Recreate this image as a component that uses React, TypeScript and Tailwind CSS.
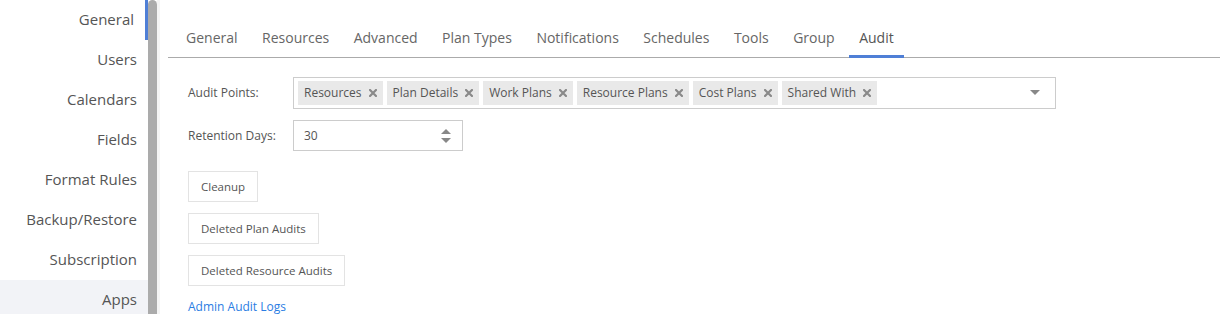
import React from "react";

const sideItems = ["General", "Users", "Calendars", "Fields", "Format Rules", "Backup/Restore", "Subscription", "Apps"];
const tabs = ["General", "Resources", "Advanced", "Plan Types", "Notifications", "Schedules", "Tools", "Group", "Audit"];
const tags = ["Resources", "Plan Details", "Work Plans", "Resource Plans", "Cost Plans", "Shared With"];

function XIcon() {
  return (
    <svg width="8" height="8" viewBox="0 0 8 8" className="ml-[7px]">
      <path d="M1 1L7 7M7 1L1 7" stroke="#8a8a8a" strokeWidth="2.2" strokeLinecap="square" />
    </svg>
  );
}

export default function App() {
  return (
    <div className="flex h-[314px] w-[1220px] overflow-hidden bg-white" style={{ fontFamily: '"Open Sans", "Noto Sans", sans-serif' }}>
      <div className="flex w-[148px] shrink-0 flex-col">
        {sideItems.map((s, i) => (
          <div
            key={s}
            className={`flex h-[40px] shrink-0 items-center justify-end pb-[1px] pr-[11px] text-[15px] text-[#555] ${i === 0 ? "border-r-[3px] border-[#4f7fd6] pr-[8px]" : ""} ${i === 7 ? "bg-[#f2f3f7]" : ""}`}
          >
            {s}
          </div>
        ))}
      </div>
      <div className="w-[9px] shrink-0 rounded-t-[5px] bg-[#ababab]" />
      <div className="w-[3px] shrink-0 bg-[#f4f4f4]" />
      <div className="flex min-w-0 flex-1 flex-col pl-[8px]">
        <div className="flex h-[58px] shrink-0 items-end gap-[4.5px] border-b border-[#ababab] pl-[8px]">
          {tabs.map((t) => (
            <div
              key={t}
              className={`-mb-px px-[10px] pb-[7px] text-[14px] leading-[20px] ${t === "Audit" ? "border-b-[3px] border-[#4f7fd6] text-[#555]" : "border-b-[3px] border-transparent text-[#666]"}`}
            >
              {t}
            </div>
          ))}
        </div>
        <div className="flex shrink-0 flex-col pl-[20px] pt-[19px] text-[12px] text-[#555]">
          <div className="flex items-center">
            <div className="w-[105px] shrink-0">Audit Points:</div>
            <div className="flex h-[32px] w-[763px] items-center gap-[4px] border border-[#ccc] px-[4px]">
              {tags.map((t) => (
                <div key={t} className="flex h-[24px] items-center bg-[#e9e9e9] px-[6px] text-[#555]">
                  {t}
                  <XIcon />
                </div>
              ))}
              <div className="flex-1" />
              <svg width="10" height="6" viewBox="0 0 10 6" className="mr-[11px]">
                <path d="M0 0H10L5 5Z" fill="#888" />
              </svg>
            </div>
          </div>
          <div className="mt-[11px] flex items-center">
            <div className="w-[105px] shrink-0">Retention Days:</div>
            <div className="flex h-[31px] w-[170px] items-center border border-[#ccc] pl-[10px] pr-[10px]">
              <span className="flex-1">30</span>
              <svg width="12" height="16" viewBox="0 0 12 16">
                <path d="M1 6L6 1L11 6Z" fill="#888" />
                <path d="M1 10L6 15L11 10Z" fill="#888" />
              </svg>
            </div>
          </div>
          <div className="mt-[20px] flex flex-col items-start gap-[11px]">
            {["Cleanup", "Deleted Plan Audits", "Deleted Resource Audits"].map((b) => (
              <button key={b} className="h-[31px] border border-[#e3e3e3] bg-white px-[12px] text-[11.5px] text-[#555]">
                {b}
              </button>
            ))}
          </div>
          <a className="mt-[12px] text-[12px] text-[#2b7de3]">Admin Audit Logs</a>
        </div>
      </div>
    </div>
  );
}
